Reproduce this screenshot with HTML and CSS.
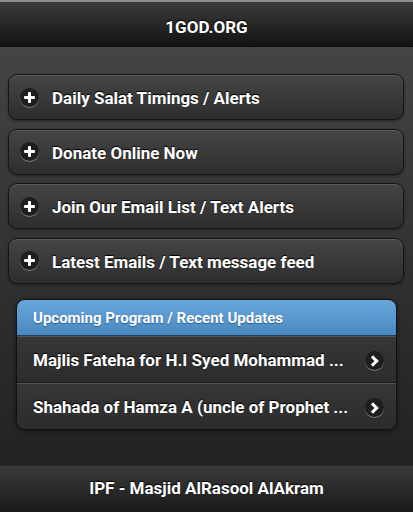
FILE: index.html
```html
<!DOCTYPE html>
<html>
<head>
<meta charset="utf-8">
<link rel="stylesheet" href="styles.css">
</head>
<body>
<div class="page">
  <header class="bar header"><h1 class="title">1GOD.ORG</h1></header>
  <main class="content">
    <div class="collapsible"><span class="icon plus"></span><span class="label">Daily Salat Timings / Alerts</span></div>
    <div class="collapsible"><span class="icon plus"></span><span class="label">Donate Online Now</span></div>
    <div class="collapsible"><span class="icon plus"></span><span class="label">Join Our Email List / Text Alerts</span></div>
    <div class="collapsible"><span class="icon plus"></span><span class="label">Latest Emails / Text message feed</span></div>
    <ul class="list">
      <li class="divider">Upcoming Program / Recent Updates</li>
      <li class="item"><span class="item-text">Majlis Fateha for H.I Syed Mohammad ...</span><span class="icon arrow"></span></li>
      <li class="item"><span class="item-text">Shahada of Hamza A (uncle of Prophet ...</span><span class="icon arrow"></span></li>
    </ul>
  </main>
  <footer class="bar footer"><h2 class="title">IPF - Masjid AlRasool AlAkram</h2></footer>
</div>
</body>
</html>
```

FILE: styles.css
```css
* { box-sizing: border-box; }
html, body { margin: 0; padding: 0; }
body {
  font-family: Roboto, "Liberation Sans", sans-serif;
  color: #fff;
  background: #222;
}
.page {
  width: 413px;
  height: 512px;
  display: flex;
  flex-direction: column;
  overflow: hidden;
}
.bar {
  height: 47px;
  flex: none;
  display: flex;
  align-items: center;
  justify-content: center;
  background: linear-gradient(#3c3c3c, #111);
  border-top: 2px solid #8c8c8c;
}
.header { padding-top: 4px; }
.footer {
  border-top: 1px solid #2a2a2a;
  background: linear-gradient(#3a3a3a, #1a1a1a);
  padding-bottom: 2px;
}
.title {
  margin: 0;
  font-size: 17px;
  font-weight: 700;
  text-shadow: 0 -1px 1px #000;
}
.content {
  flex: 1;
  padding: 27px 9px 0 8px;
  display: flex;
  flex-direction: column;
  gap: 8.5px;
  background: linear-gradient(#444 0%, #2b2b2b 70%, #222 100%);
}
.collapsible {
  height: 46px;
  flex: none;
  display: flex;
  align-items: center;
  padding-left: 11px;
  border: 1px solid #151515;
  border-radius: 9px;
  background: linear-gradient(#454545, #2d2d2d);
  box-shadow: inset 0 1px 0 rgba(255,255,255,0.12), 0 1px 3px rgba(0,0,0,0.4);
}
.label {
  margin-left: 13px;
  padding-top: 2px;
  font-size: 17px;
  font-weight: 700;
  text-shadow: 0 -1px 1px #000;
}
.icon {
  width: 19px;
  height: 19px;
  border-radius: 50%;
  background: #1e1e1e;
  box-shadow: 0 1px 0 rgba(255,255,255,0.35);
  position: relative;
  flex: none;
}
.plus::before, .plus::after {
  content: "";
  position: absolute;
  background: #fff;
  border-radius: 1px;
}
.plus::before { left: 4px; top: 8px; width: 11px; height: 3px; }
.plus::after { left: 8px; top: 4px; width: 3px; height: 11px; }
.arrow::before {
  content: "";
  position: absolute;
  left: 4px;
  top: 6px;
  width: 5px;
  height: 5px;
  border-right: 3px solid #fff;
  border-top: 3px solid #fff;
  transform: rotate(45deg);
}
.list {
  list-style: none;
  margin: 7px 7px 0 8px;
  padding: 0;
  border: 1px solid #111;
  border-radius: 9px;
  overflow: hidden;
  box-shadow: 0 1px 4px rgba(0,0,0,0.5);
}
.divider {
  height: 36px;
  display: flex;
  align-items: center;
  padding-left: 16px;
  padding-top: 1px;
  font-size: 15px;
  font-weight: 700;
  background: linear-gradient(#68a8dc, #4a87c1);
  border-bottom: 1px solid #1f3f60;
  text-shadow: 0 1px 1px #2d5f8e;
}
.item {
  height: 47px;
  display: flex;
  align-items: center;
  padding: 1px 12px 0 16px;
  background: linear-gradient(#363636, #2c2c2c);
  border-top: 1px solid #545454;
  border-bottom: 1px solid #1a1a1a;
}
.item:last-child { border-bottom: 0; height: 46px; }
.item-text {
  flex: 1;
  font-size: 17px;
  font-weight: 700;
  white-space: nowrap;
  text-shadow: 0 -1px 1px #000;
}
```
